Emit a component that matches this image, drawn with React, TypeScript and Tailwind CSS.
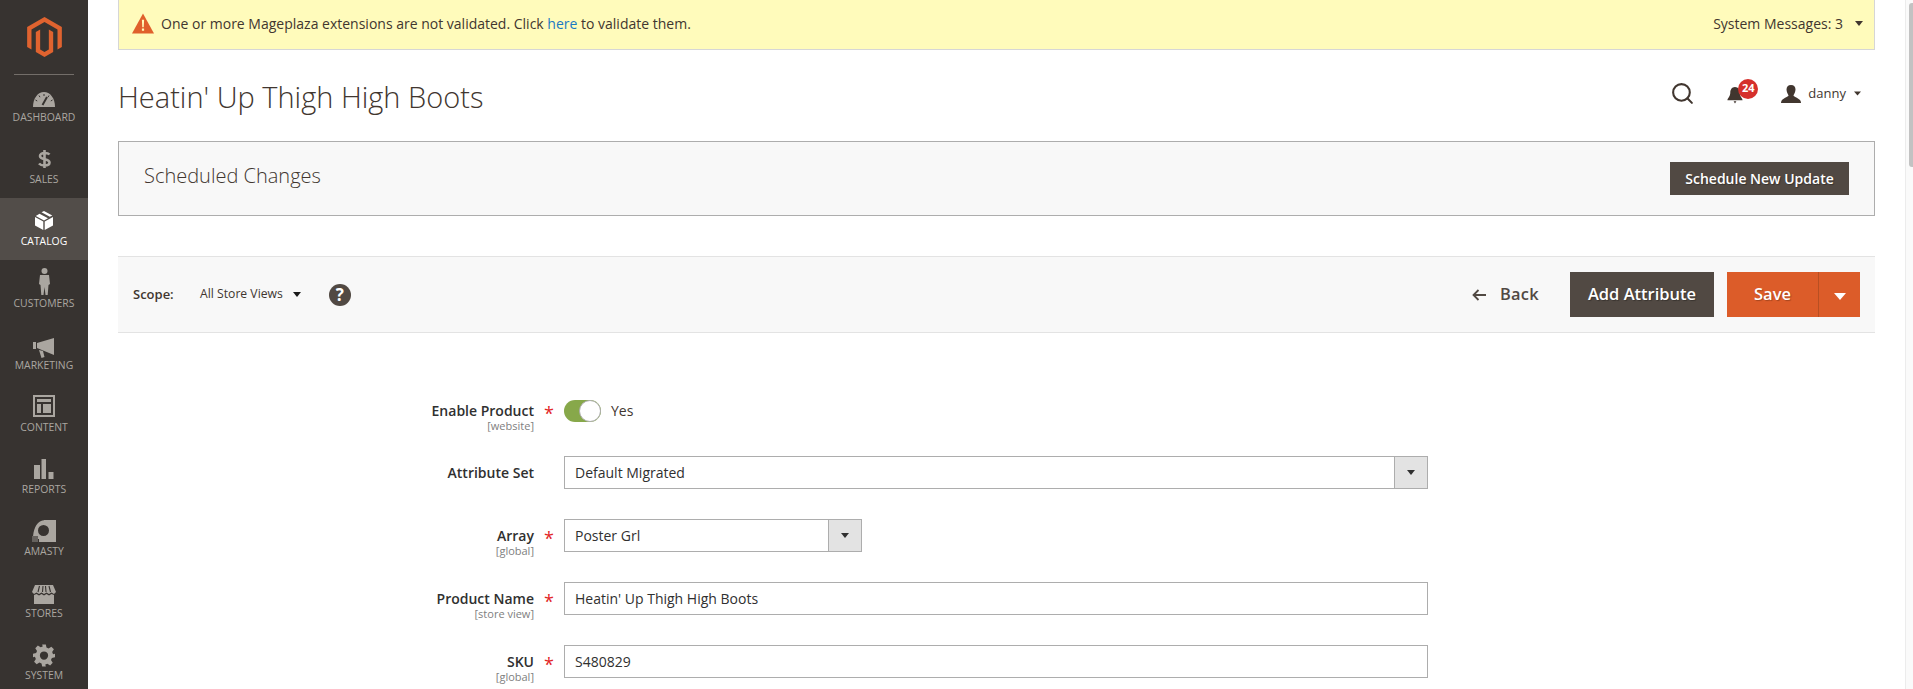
import React from "react";
import { Search } from "lucide-react";

const Caret = ({ className }: { className?: string }) => (
  <svg viewBox="0 0 10 6" className={className}>
    <path d="M0 0h10L5 6z" fill="currentColor" />
  </svg>
);

const DashboardIcon = () => (
  <svg viewBox="0 0 22 15" className="mb-[3px] h-[15px] w-[22px]">
    <path fill="#aaa6a0" d="M0 15C0 6 5 0 11 0s11 6 11 15z" />
    <path stroke="#373330" strokeWidth="1" d="M11 2v2M6 3.500l1 1.700M16 3.500l-1 1.700M2.500 8l1.700 1M19.500 8l-1.700 1" />
    <path stroke="#373330" strokeWidth="2" d="M9.500 13l4.500-8" />
  </svg>
);

const SalesIcon = () => (
  <svg viewBox="0 0 13 18" className="mb-[4px] h-[18px] w-[13px]">
    <path
      fill="none"
      stroke="#aaa6a0"
      strokeWidth="2.600"
      d="M11.500 4.500C10.500 3.300 8.800 3 6.500 3 4 3 2 4 2 6c0 4.500 9.500 2 9.500 6.500 0 2-2.200 3-5 3-2.500 0-4.500-.8-5.500-2M6.500 0v18"
    />
  </svg>
);

const CatalogIcon = () => (
  <svg viewBox="0 0 18 19" className="mb-[4px] h-[19px] w-[18px]">
    <path
      fill="#fff"
      d="M0 6l8.300 4.500V19L0 14.500zM18 6l-8.300 4.500V19L18 14.500zM6.500 1.300L9 0l8.300 4.500-2.500 1.300zM.8 5l3.700-2.200L13 7.200 9 9.500z"
    />
  </svg>
);

const CustomersIcon = () => (
  <svg viewBox="0 0 11 27" className="mb-[1px] h-[27px] w-[11px]">
    <circle cx="5.500" cy="3" r="3" fill="#aaa6a0" />
    <path fill="#aaa6a0" d="M1 7h9l1 9-1.500 1-.8 10H6.500l-1-8-1 8H2.300l-.8-10L0 16z" />
  </svg>
);

const MarketingIcon = () => (
  <svg viewBox="0 0 22 20" className="h-[20px] w-[22px]">
    <path fill="#aaa6a0" d="M4 5L21 0v17L4 10zM0 4h3v7H0zM6 12l4 1 1.500 6-3 1z" />
  </svg>
);

const ContentIcon = () => (
  <svg viewBox="0 0 22 22" className="mb-[3px] h-[22px] w-[22px]">
    <path fill="none" stroke="#aaa6a0" strokeWidth="2" d="M1 1h20v20H1z" />
    <path fill="#aaa6a0" d="M4 4h14v3H4zM4 9h4v9H4zM10 9h8v9h-8z" />
  </svg>
);

const ReportsIcon = () => (
  <svg viewBox="0 0 20 20" className="mb-[3px] h-[20px] w-[20px]">
    <path fill="#aaa6a0" d="M0 6h6v14H0zM7.500 0H12v20H7.500zM14.500 13h5v7h-5z" />
  </svg>
);

const AmastyIcon = () => (
  <svg viewBox="0 0 24 22" className="mb-[2px] h-[22px] w-[24px]">
    <path
      fill="#aaa6a0"
      fillRule="evenodd"
      d="M9 1c1-.5 2-.7 3-.7V0h12v22H7v-3H1C1 10 4 3 9 1zM11.500 5a5.500 5.500 0 100 11 5.500 5.500 0 000-11z"
    />
    <path fill="#66625e" d="M0 16h6v6H0z" />
  </svg>
);

const StoresIcon = () => (
  <svg viewBox="0 0 24 19" className="mb-[2px] h-[19px] w-[24px]">
    <path fill="#aaa6a0" d="M3 0h18l3 7-2 2-2.500-1.500L17 9l-2.500-1.500L12 9 9.500 7.500 7 9 4.500 7.500 2 9 0 7z" />
    <path fill="#aaa6a0" d="M2 10l2.500-1L7 10.500 9.500 9l2.500 1.500L14.500 9l2.500 1.500L19.500 9l2.500 1v9H2z" />
    <path stroke="#373330" strokeWidth="1.100" d="M7.500 1L6 7M11 1l-.5 6M13.500 1l.5 6M17 1l1.500 6" />
  </svg>
);

const SystemIcon = () => (
  <svg viewBox="0 0 24 24" className="mb-[1px] h-[23px] w-[22px]">
    <path
      fill="#aaa6a0"
      fillRule="evenodd"
      d="M10 0h4l.7 3.400 2.300 1 3-1.900 2.800 2.800-1.900 3 1 2.300L24 10v4l-3.400.7-1 2.300 1.900 3-2.800 2.800-3-1.900-2.300 1L14 24h-4l-.7-3.400-2.300-1-3 1.900-2.800-2.800 1.900-3-1-2.300L0 14v-4l3.400-.7 1-2.300-1.900-3 2.800-2.800 3 1.900 2.300-1zM12 7.500a4.500 4.500 0 100 9 4.500 4.500 0 000-9z"
    />
  </svg>
);

const menu: { label: string; icon: React.ReactNode; active?: boolean }[] = [
  { label: "DASHBOARD", icon: <DashboardIcon /> },
  { label: "SALES", icon: <SalesIcon /> },
  { label: "CATALOG", icon: <CatalogIcon />, active: true },
  { label: "CUSTOMERS", icon: <CustomersIcon /> },
  { label: "MARKETING", icon: <MarketingIcon /> },
  { label: "CONTENT", icon: <ContentIcon /> },
  { label: "REPORTS", icon: <ReportsIcon /> },
  { label: "AMASTY", icon: <AmastyIcon /> },
  { label: "STORES", icon: <StoresIcon /> },
  { label: "SYSTEM", icon: <SystemIcon /> },
];

const Sidebar = () => (
  <aside className="flex w-[88px] shrink-0 flex-col bg-[#373330]">
    <div className="flex h-[74px] shrink-0 items-start justify-center pt-[17px]">
      <svg viewBox="0 0 36 41.500" className="h-[40px] w-[35px]">
        <path
          fill="#e0632f"
          d="M18 0l18 10.400v20.800l-4.500 2.600V12.900L18 5.200 4.500 12.900v20.900L0 31.200V10.400zM22.500 33.700L18 36.300l-4.500-2.600V12.900L9 15.500v20.800l9 5.200 9-5.200V15.500l-4.500-2.600z"
        />
      </svg>
    </div>
    <div className="relative z-10 mx-[14px] -mb-px h-px shrink-0 bg-[#736e69]" />
    {menu.map((item) => (
      <div
        key={item.label}
        className={`flex h-[62px] shrink-0 flex-col items-center ${item.active ? "bg-[#524d49] text-white" : "text-[#aaa6a0]"}`}
      >
        <div className="flex h-[36px] items-end justify-center">{item.icon}</div>
        <span className="text-[10.4px] leading-[14px]">{item.label}</span>
      </div>
    ))}
  </aside>
);

const Field = ({
  label,
  hint,
  required,
  className,
  children,
}: {
  label: string;
  hint?: string;
  required?: boolean;
  className?: string;
  children: React.ReactNode;
}) => (
  <div className={`flex h-[33px] items-start ${className ?? ""}`}>
    <div className="w-[416px] shrink-0 text-right">
      <div className="text-[14px] leading-[33px] font-semibold text-[#303030]">{label}</div>
      {hint && <div className="-mt-[8px] text-[11px] leading-[14px] text-[#808080]">{hint}</div>}
    </div>
    <div className="flex w-[30px] shrink-0 justify-center pt-[4px] text-[18px] leading-[30px] text-[#e22626]">
      {required ? "*" : ""}
    </div>
    {children}
  </div>
);

const TextBox = ({ value }: { value: string }) => (
  <div className="flex h-[33px] w-[864px] items-center border border-[#adadad] bg-white px-[10px] text-[14px] text-[#303030]">
    {value}
  </div>
);

const SelectBox = ({ value, width }: { value: string; width: string }) => (
  <div className={`flex h-[33px] items-stretch border border-[#adadad] bg-white text-[14px] text-[#303030] ${width}`}>
    <div className="flex flex-1 items-center px-[10px]">{value}</div>
    <div className="flex w-[33px] items-center justify-center border-l border-[#adadad] bg-[#e3e3e3]">
      <Caret className="h-[5px] w-[8px] text-[#303030]" />
    </div>
  </div>
);

export default function App() {
  return (
    <div className="flex h-[689px] w-[1913px] overflow-hidden bg-white font-['Open_Sans',sans-serif] text-[#303030]">
      <Sidebar />

      <main className="flex min-w-0 flex-1 flex-col px-[30px]">
        {/* notice bar */}
        <div className="flex h-[50px] shrink-0 items-center justify-between border-x border-b border-[#d6d6d6] bg-[#fffbbb] pr-[11px] pb-[2px] pl-[13px] text-[14px] text-[#41362f]">
          <div className="flex items-center">
            <svg viewBox="0 0 24 22" className="mr-[7px] h-[21px] w-[22px]">
              <path fill="#e0602c" d="M12 0l12 22H0z" />
              <path fill="#fffbbb" d="M10.800 7h2.400l-.4 8h-1.600zM10.800 16.500h2.400v2.400h-2.400z" />
            </svg>
            <span>
              One or more Mageplaza extensions are not validated. Click{" "}
              <span className="text-[#1979c3]">here</span> to validate them.
            </span>
          </div>
          <div className="flex items-center">
            <span>System Messages: 3</span>
            <Caret className="ml-[12px] h-[5px] w-[8px] text-[#41362f]" />
          </div>
        </div>

        {/* title + header actions */}
        <div className="flex h-[91px] shrink-0 items-center justify-between">
          <h1 className="pt-[2px] text-[29px] font-light text-[#41362f]">Heatin' Up Thigh High Boots</h1>
          <div className="flex items-center pr-[14px] pb-[4px] text-[#41362f]">
            <Search className="mr-[32px] h-[25px] w-[25px]" strokeWidth={2} />
            <div className="relative mr-[24px] h-[20px] w-[30px]">
              <svg viewBox="0 0 16 18" className="absolute top-[3px] left-0 h-[17px] w-[16px]">
                <path fill="currentColor" d="M8 0c3.500 0 5 3 5 6 0 4 3 6 3 8H0c0-2 3-4 3-8 0-3 1.500-6 5-6zM6.500 15h3L8 17.500z" />
              </svg>
              <span className="absolute -top-[5px] left-[11px] flex h-[20px] w-[20px] items-center justify-center rounded-full bg-[#d5302c] text-[11px] font-bold text-white">
                24
              </span>
            </div>
            <svg viewBox="0 0 20 18" className="mr-[7px] h-[18px] w-[20px]">
              <path fill="currentColor" d="M10 0c3 0 4.500 2 4.500 4.500S13 9 12.500 10.500c0 1 4 2 6.500 4.500 1 1 1 3 1 3H0s0-2 1-3c2.500-2.500 6.500-3.500 6.500-4.500C7 9 5.500 7 5.500 4.500S7 0 10 0z" />
            </svg>
            <span className="mr-[8px] text-[13px]">danny</span>
            <Caret className="h-[5px] w-[7px]" />
          </div>
        </div>

        {/* scheduled changes */}
        <div className="flex h-[75px] shrink-0 items-start justify-between border border-[#adadad] bg-[#f8f8f8] pt-[20px] pr-[25px] pl-[25px]">
          <h2 className="text-[20px] leading-[28px] font-light text-[#41362f]">Scheduled Changes</h2>
          <button className="h-[33px] w-[179px] bg-[#514943] text-[14px] font-semibold text-white [text-shadow:1px_1px_1px_rgba(0,0,0,0.3)]">
            Schedule New Update
          </button>
        </div>

        {/* scope toolbar */}
        <div className="mt-[40px] flex h-[77px] shrink-0 items-center justify-between border-y border-[#e3e3e3] bg-[#f8f8f8] px-[15px]">
          <div className="flex items-center">
            <span className="w-[67px] text-[13px] font-semibold text-[#41362f]">Scope:</span>
            <span className="text-[12.2px] text-[#41362f]">All Store Views</span>
            <Caret className="ml-[10px] h-[5px] w-[8px] text-[#1a1a1a]" />
            <span className="ml-[28px] flex h-[22px] w-[22px] items-center justify-center rounded-full bg-[#514943] text-[17px] font-bold text-white">?</span>
          </div>
          <div className="flex items-center">
            <svg viewBox="0 0 14 12" className="mr-[14px] h-[12px] w-[14px] text-[#514943]">
              <path fill="none" stroke="currentColor" strokeWidth="1.800" d="M14 6H2M6.500 1L1.500 6l5 5" />
            </svg>
            <span className="mr-[31px] text-[16.4px] font-semibold tracking-[0.3px] text-[#514943]">Back</span>
            <button className="mr-[13px] h-[45px] w-[144px] bg-[#514943] text-[16.5px] font-semibold text-white [text-shadow:1px_1px_1px_rgba(0,0,0,0.3)]">
              Add Attribute
            </button>
            <div className="flex h-[45px] w-[133px] bg-[#dc5c29] text-white">
              <button className="flex-1 border-r border-[#b84f22] text-[16.5px] font-semibold [text-shadow:1px_1px_1px_rgba(0,0,0,0.25)]">Save</button>
              <div className="flex w-[41px] items-center justify-center pt-[3px]">
                <Caret className="h-[9px] w-[12px]" />
              </div>
            </div>
          </div>
        </div>

        {/* product form */}
        <div className="flex flex-col gap-[30px] pt-[61px]">
          <Field label="Enable Product" hint="[website]" required className="-mb-[1px]">
            <div className="flex h-[33px] items-center">
              <div className="flex h-[22px] w-[37px] items-center justify-end rounded-full bg-[#87a84a]">
                <div className="h-[22px] w-[22px] rounded-full border border-[#adadad] bg-white" />
              </div>
              <span className="ml-[10px] text-[14px] text-[#41362f]">Yes</span>
            </div>
          </Field>
          <Field label="Attribute Set">
            <SelectBox value="Default Migrated" width="w-[864px]" />
          </Field>
          <Field label="Array" hint="[global]" required>
            <SelectBox value="Poster Grl" width="w-[298px]" />
          </Field>
          <Field label="Product Name" hint="[store view]" required>
            <TextBox value="Heatin' Up Thigh High Boots" />
          </Field>
          <Field label="SKU" hint="[global]" required>
            <TextBox value="S480829" />
          </Field>
        </div>
      </main>

      {/* page scrollbar */}
      <div className="flex w-[8px] shrink-0 justify-end border-l border-[#ececec] bg-[#fafafa]">
        <div className="mt-[3px] h-[164px] w-[4px] rounded-l-[3px] bg-[#c2c2c2]" />
      </div>
    </div>
  );
}
